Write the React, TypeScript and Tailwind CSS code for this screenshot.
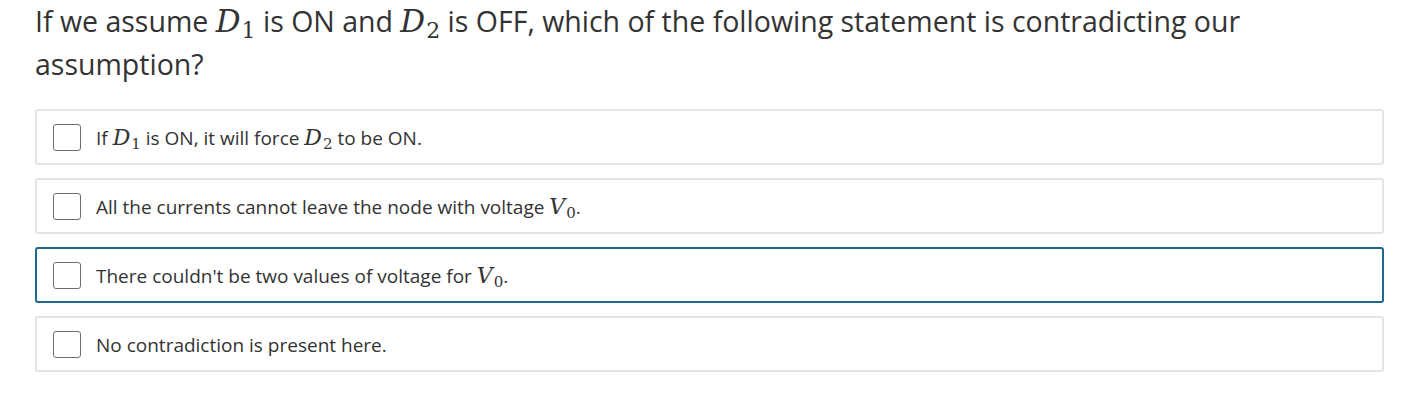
import React from "react";

const options: { id: string; content: React.ReactNode; selected?: boolean }[] = [
  {
    id: "a",
    content: (
      <>
        If <M v="D" s="1" /> is ON, it will force <M v="D" s="2" /> to be ON.
      </>
    ),
  },
  {
    id: "b",
    content: (
      <>
        All the currents cannot leave the node with voltage <M v="V" s="0" />.
      </>
    ),
  },
  {
    id: "c",
    selected: true,
    content: (
      <>
        There couldn't be two values of voltage for <M v="V" s="0" />.
      </>
    ),
  },
  { id: "d", content: <>No contradiction is present here.</> },
];

function M({ v, s, big }: { v: string; s: string; big?: boolean }) {
  return (
    <span className="font-['DejaVu_Serif','Liberation_Serif',serif] whitespace-nowrap leading-none">
      <span className={`italic leading-none ${big ? "text-[31px]" : "text-[22px]"}`}>{v}</span>
      <span className={`relative leading-none ml-[1px] ${big ? "text-[22px] top-[6px]" : "text-[15px] top-[4px]"}`}>{s}</span>
    </span>
  );
}

export default function App() {
  return (
    <div className="bg-white w-[1408px] h-[405px] pl-[35px] pr-[24px] font-['Open_Sans','Noto_Sans',sans-serif] text-[#333]">
      <h1 className="text-[28.5px] leading-[43px] font-normal">
        If we assume <M v="D" s="1" big /> is ON and <M v="D" s="2" big /> is OFF, which of the following statement is
        contradicting our assumption?
      </h1>
      <div className="mt-[23px] flex flex-col gap-[13px]">
        {options.map((o) => (
          <label
            key={o.id}
            className={`h-[56px] flex items-center gap-[15px] pl-[16px] rounded-[3px] border-2 ${
              o.selected ? "border-[#1f6a8c]" : "border-[#e4e4e4]"
            }`}
          >
            <span className="w-[28px] h-[27px] shrink-0 rounded-[3px] border-[1.5px] border-[#6e6e6e] bg-white" />
            <span className="text-[19px] leading-[26px] text-[#333] mt-[2px]">{o.content}</span>
          </label>
        ))}
      </div>
    </div>
  );
}
